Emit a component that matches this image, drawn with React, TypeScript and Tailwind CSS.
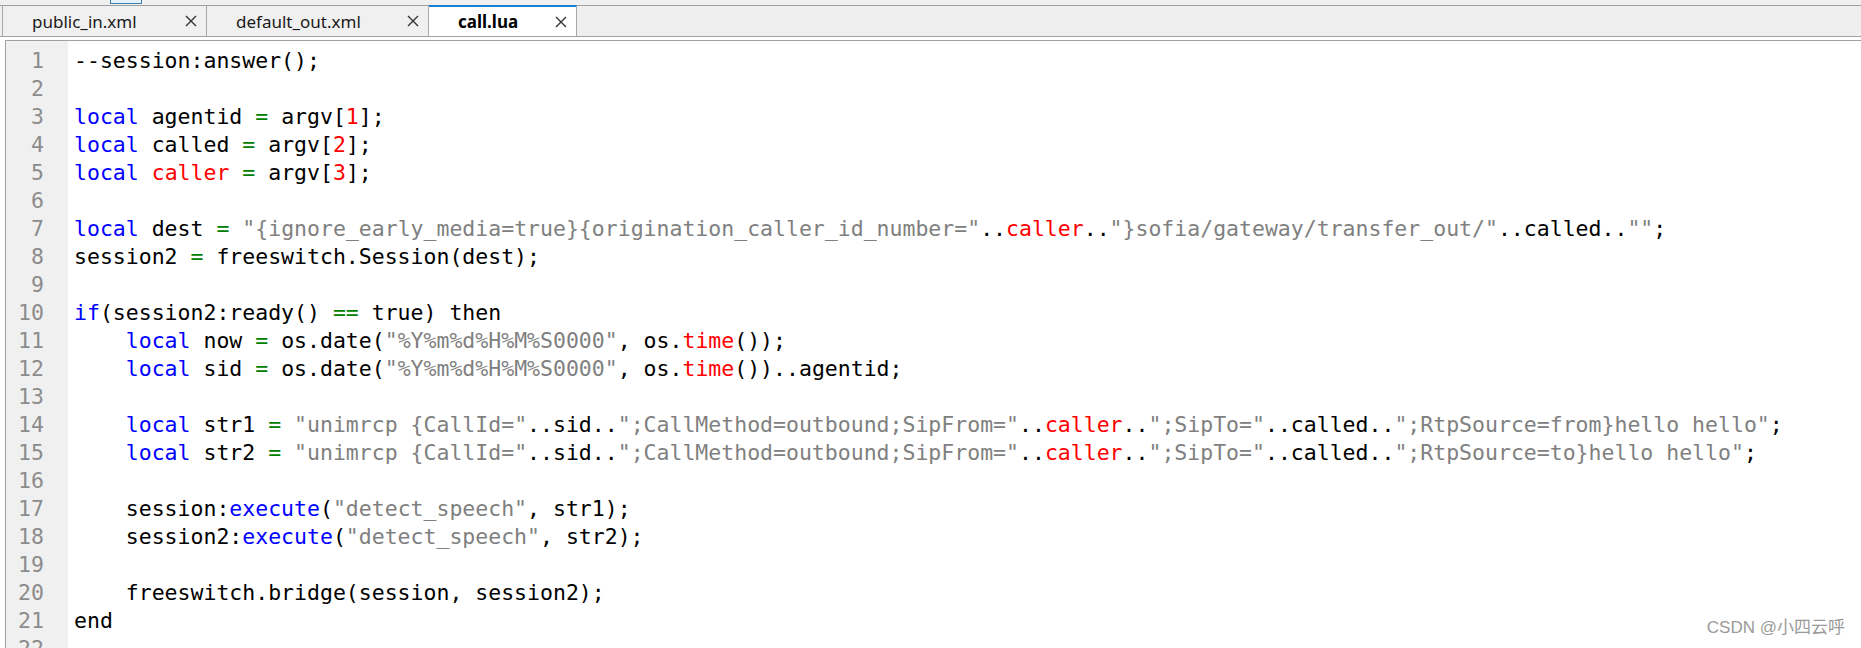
import React from "react";

type Seg = [string, string?];

const KW = "text-[#0000ff]";
const OP = "text-[#008000]";
const STR = "text-[#808080]";
const RED = "text-[#ff0000]";

const lines: Seg[][] = [
  [["--session:answer();"]],
  [],
  [["local", KW], [" agentid "], ["=", OP], [" argv["], ["1", RED], ["];"]],
  [["local", KW], [" called "], ["=", OP], [" argv["], ["2", RED], ["];"]],
  [["local", KW], [" "], ["caller", RED], [" "], ["=", OP], [" argv["], ["3", RED], ["];"]],
  [],
  [
    ["local", KW],
    [" dest "],
    ["=", OP],
    [" "],
    ['"{ignore_early_media=true}{origination_caller_id_number="', STR],
    [".."],
    ["caller", RED],
    [".."],
    ['"}sofia/gateway/transfer_out/"', STR],
    ["..called.."],
    ['""', STR],
    [";"],
  ],
  [["session2 "], ["=", OP], [" freeswitch.Session(dest);"]],
  [],
  [["if", KW], ["(session2:ready() "], ["==", OP], [" true) then"]],
  [["    "], ["local", KW], [" now "], ["=", OP], [" os.date("], ['"%Y%m%d%H%M%S0000"', STR], [", os."], ["time", RED], ["());"]],
  [["    "], ["local", KW], [" sid "], ["=", OP], [" os.date("], ['"%Y%m%d%H%M%S0000"', STR], [", os."], ["time", RED], ["())..agentid;"]],
  [],
  [
    ["    "],
    ["local", KW],
    [" str1 "],
    ["=", OP],
    [" "],
    ['"unimrcp {CallId="', STR],
    ["..sid.."],
    ['";CallMethod=outbound;SipFrom="', STR],
    [".."],
    ["caller", RED],
    [".."],
    ['";SipTo="', STR],
    ["..called.."],
    ['";RtpSource=from}hello hello"', STR],
    [";"],
  ],
  [
    ["    "],
    ["local", KW],
    [" str2 "],
    ["=", OP],
    [" "],
    ['"unimrcp {CallId="', STR],
    ["..sid.."],
    ['";CallMethod=outbound;SipFrom="', STR],
    [".."],
    ["caller", RED],
    [".."],
    ['";SipTo="', STR],
    ["..called.."],
    ['";RtpSource=to}hello hello"', STR],
    [";"],
  ],
  [],
  [["    session:"], ["execute", KW], ["("], ['"detect_speech"', STR], [", str1);"]],
  [["    session2:"], ["execute", KW], ["("], ['"detect_speech"', STR], [", str2);"]],
  [],
  [["    freeswitch.bridge(session, session2);"]],
  [["end"]],
  [],
];

const tabs = [
  { name: "public_in.xml", width: "w-[205px]", active: false },
  { name: "default_out.xml", width: "w-[222px]", active: false },
  { name: "call.lua", width: "w-[148px]", active: true },
];

function CloseIcon() {
  return (
    <svg width="12" height="12" viewBox="0 0 12 12" className="shrink-0">
      <path d="M1 1 L11 11 M11 1 L1 11" stroke="#333" strokeWidth="1.4" fill="none" />
    </svg>
  );
}

export default function App() {
  return (
    <div className="relative h-[648px] w-[1861px] overflow-hidden bg-white">
      {/* top strip */}
      <div className="flex h-[6px] border-b border-[#a0a0a0] bg-[#f0f0f0]">
        <div className="ml-[110px] h-[4px] w-[32px] border-x border-b border-[#3c7fb1] bg-[#e5f1fb]" />
      </div>

      {/* tab bar */}
      <div className="flex h-[31px] border-b border-[#a0a0a0] bg-[#efefef] pl-[2px] font-['Noto_Sans',sans-serif] text-[17px] text-[#1a1a1a]">
        {tabs.map((t) => (
          <div
            key={t.name}
            className={`flex ${t.width} items-center justify-between border-r border-[#a8a8a8] pl-[29px] pr-[9px] ${
              t.active ? "-mt-px border-t-2 border-t-[#1a7fd4] bg-white font-bold text-black" : "bg-[#f0f0f0]"
            } ${t.name === "public_in.xml" ? "border-l" : ""}`}
          >
            <span className="leading-none">{t.name}</span>
            <CloseIcon />
          </div>
        ))}
      </div>

      <div className="h-[3px] bg-white" />

      {/* editor */}
      <div className="ml-[5px] flex h-[608px] border-l border-t border-[#a0a0a0] font-['DejaVu_Sans_Mono',monospace] text-[21.5px]">
        <div className="w-[62px] shrink-0 bg-[#f0f0f0] pt-[6px] pr-[24px] text-right text-[#8c8c8c]">
          {lines.map((_, i) => (
            <div key={i} className="h-[28px] leading-[28px]">
              {i + 1}
            </div>
          ))}
        </div>
        <div className="flex-1 pl-[6px] pt-[6px] text-black">
          {lines.map((segs, i) => (
            <div key={i} className="h-[28px] whitespace-pre leading-[28px]">
              {segs.map(([text, cls], j) => (
                <span key={j} className={cls}>
                  {text}
                </span>
              ))}
            </div>
          ))}
        </div>
      </div>

      {/* watermark */}
      <div className="absolute bottom-[8px] right-[16px] font-['Liberation_Sans','Noto_Sans_CJK_SC',sans-serif] text-[17px] text-[#9a9a9a]">
        CSDN @小四云呼
      </div>
    </div>
  );
}
